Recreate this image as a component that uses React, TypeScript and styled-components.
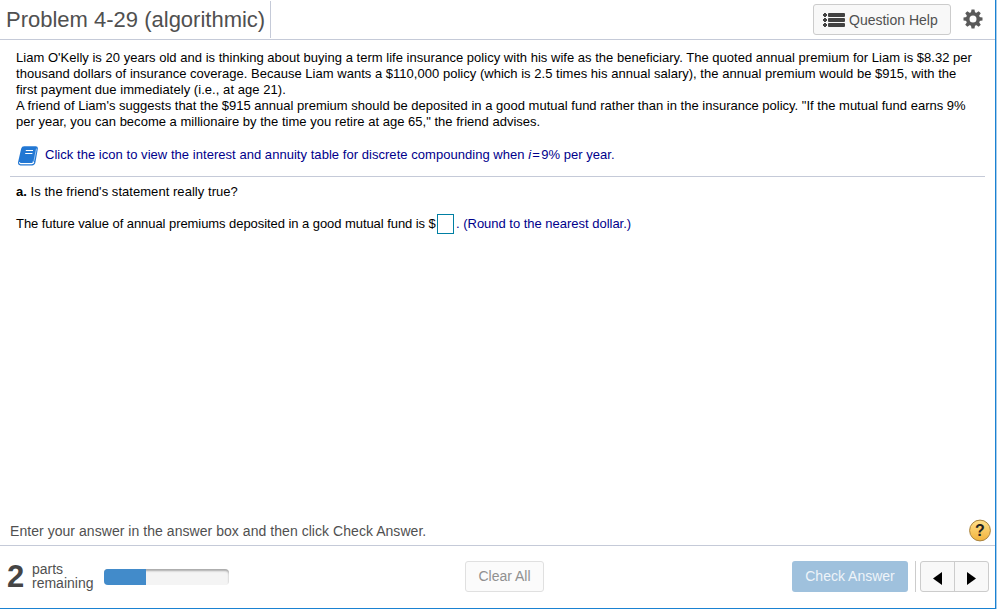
import React from "react";
import styled, { createGlobalStyle } from "styled-components";

const GlobalStyle = createGlobalStyle`
  * { box-sizing: border-box; }
  body { margin: 0; background: #fff; font-family: "Liberation Sans", Arial, sans-serif; }
  button { font-family: inherit; }
`;

const Shell = styled.div`
  display: flex;
  width: 997px;
  height: 609px;
  overflow: hidden;
  border-right: 1px solid #a9cdec;
`;

const Panel = styled.main`
  display: flex;
  flex-direction: column;
  width: 996px;
  height: 609px;
  background: #fff;
  border-right: 1px solid #1a82d2;
  border-bottom: 1px solid #1a82d2;
`;

const Header = styled.header`
  display: flex;
  align-items: flex-start;
  height: 40px;
  border-bottom: 1px solid #c5cad8;
`;

const Title = styled.h1`
  margin: 1px 0 0;
  padding-left: 6px;
  width: 271px;
  height: 37px;
  border-right: 1px solid #c5cad8;
  font-size: 22px;
  font-weight: 400;
  line-height: 37px;
  white-space: nowrap;
  color: #505050;
`;

const HelpButton = styled.button`
  display: flex;
  align-items: center;
  gap: 4px;
  width: 138px;
  height: 31px;
  margin: 4px 0 0 auto;
  padding: 0 0 0 9px;
  border: 1px solid #ccc;
  border-radius: 3px;
  background: #f8f8f8;
  color: #505050;
  font-size: 14px;
  white-space: nowrap;
`;

const GearButton = styled.button`
  display: flex;
  width: 20px;
  height: 20px;
  margin: 9px 12px 0 12px;
  padding: 0;
  border: 0;
  background: none;
`;

const Content = styled.section`
  flex: 1;
  padding: 10px 10px 0;
`;

const Line = styled.div<{ $tracking?: number }>`
  flex: none;
  height: 16px;
  padding-left: 6px;
  font-size: 13px;
  line-height: 16px;
  letter-spacing: ${(p) => p.$tracking ?? 0}px;
  white-space: nowrap;
  color: #000;
`;

const TableLink = styled.a`
  display: flex;
  align-items: center;
  height: 47px;
  padding: 2px 0 0 8px;
  border-bottom: 1px solid #c5cad8;
  font-size: 13px;
  letter-spacing: 0.041px;
  white-space: pre;
  color: #00008b;
  svg { margin: 3px 7px 0 0; }
`;

const Question = styled.div`
  padding-top: 7px;
`;

const AnswerRow = styled.div`
  display: flex;
  align-items: center;
  height: 22px;
  margin-top: 13px;
`;

const Prompt = styled(Line)`
  width: 427px;
`;

const AnswerBox = styled.input`
  width: 17px;
  height: 20px;
  padding: 0;
  border: 1px solid #007fa3;
  border-radius: 0;
  outline: none;
  background: #fff;
`;

const Note = styled.span`
  margin-left: 2px;
  font-size: 13px;
  line-height: 16px;
  letter-spacing: -0.015px;
  white-space: pre;
  color: #00008b;
`;

const Hint = styled.div`
  display: flex;
  align-items: center;
  justify-content: space-between;
  height: 30px;
  padding: 0 4px 0 10px;
  border-bottom: 1px solid #c5cad8;
  font-size: 14px;
  letter-spacing: 0.048px;
  color: #505050;
`;

const Footer = styled.footer`
  display: flex;
  align-items: flex-start;
  height: 62px;
  padding: 15px 6px 0 7px;
`;

const Count = styled.strong`
  width: 25px;
  font-size: 31px;
  line-height: 31px;
  color: #454545;
`;

const Parts = styled.div`
  width: 72px;
  padding-top: 1px;
  font-size: 14px;
  line-height: 14px;
  color: #505050;
`;

const PartsWord = styled.span`
  display: block;
  height: 14px;
`;

const Progress = styled.div`
  width: 125px;
  height: 16px;
  margin-top: 8px;
  overflow: hidden;
  border-radius: 4px;
  background: #f4f4f4;
  box-shadow: inset 0 2px 2px rgba(0, 0, 0, 0.3);
`;

const ProgressFill = styled.div`
  width: 42px;
  height: 100%;
  background: #428bca;
`;

const ClearButton = styled.button`
  width: 79px;
  height: 31px;
  margin-left: 236px;
  padding: 0 0 1px;
  border: 1px solid #e0e0e0;
  border-radius: 3px;
  background: #fbfbfb;
  color: #909090;
  font-size: 14px;
`;

const CheckButton = styled.button`
  width: 116px;
  height: 31px;
  margin-left: auto;
  padding: 0 0 1px;
  border: 0;
  border-radius: 3px;
  background: #9fc1dd;
  color: #eef4f9;
  font-size: 14px;
`;

const Divider = styled.div`
  width: 1px;
  height: 31px;
  margin: 0 4px 0 7px;
  background: #ccc;
`;

const Pager = styled.div`
  display: flex;
  width: 69px;
  height: 31px;
  overflow: hidden;
  border: 1px solid #ccc;
  border-radius: 3px;
  background: #f8f8f8;
`;

const PagerButton = styled.button`
  display: flex;
  align-items: center;
  justify-content: center;
  flex: 1;
  padding: 3px 0 0;
  border: 0;
  background: none;
  & + & { border-left: 1px solid #ccc; }
`;

const ListIcon = () => (
  <svg width="22" height="14" viewBox="0 0 22 14" fill="#424242">
    {[0, 5, 10].map((y) => (
      <g key={y}>
        <path d={`M1 ${y}H3V${y + 1}H4V${y + 3}H3V${y + 4}H1V${y + 3}H0V${y + 1}H1Z`} />
        <rect x="5" y={y} width="17" height="4" rx="1" />
      </g>
    ))}
  </svg>
);

const GearIcon = () => (
  <svg width="20" height="20" viewBox="-10 -10 20 20" fill="#5a5a5a">
    {[0, 45, 90, 135, 180, 225, 270, 315].map((a) => (
      <path key={a} d="M-2.1-6-1.5-9.5H1.5L2.1-6Z" transform={`rotate(${a})`} />
    ))}
    <circle r="5.3" fill="none" stroke="#5a5a5a" strokeWidth="3.6" />
  </svg>
);

const BookIcon = () => (
  <svg width="20" height="20" viewBox="0 0 20 20">
    <path d="M6.2.3H17.7Q20.3.3 19.8 3L17.4 16.6Q16.9 19.4 14 19.4H2.4Q-.5 19.1.1 16L3.2 2.6Q3.8.3 6.2.3Z" fill="#2277d3" />
    <path d="M18.5 2.6 16 14.7Q15.7 16.2 14.2 16.2" fill="none" stroke="#b8d7fa" strokeWidth=".8" />
    <path d="M1.7 16.1Q1.4 17.6 2.8 17.6H13.6Q15.4 17.6 15.8 15.8" fill="none" stroke="#fff" strokeWidth="1.1" />
    <path d="M7.8 4.5H15M7.2 7.5H14.4" stroke="#fff" strokeWidth="1.1" />
  </svg>
);

const HelpIcon = () => (
  <svg width="22" height="23" viewBox="0 0 22 23">
    <defs>
      <linearGradient id="gold" x1="0" y1="0" x2="0" y2="1">
        <stop offset="0" stopColor="#ffe08a" />
        <stop offset="1" stopColor="#f2b33d" />
      </linearGradient>
    </defs>
    <circle cx="11" cy="11.5" r="10.4" fill="url(#gold)" stroke="#a8813c" strokeWidth="1" />
    <text x="11" y="17.2" textAnchor="middle" fontSize="16" fontWeight="700" letterSpacing="0" fill="#222">?</text>
  </svg>
);

const Arrow = ({ left }: { left?: boolean }) => (
  <svg width="9" height="13" viewBox="0 0 9 13">
    <path d={left ? "M9 0V13L0 6.5Z" : "M0 0V13L9 6.5Z"} fill="#000" />
  </svg>
);

export default function App() {
  return (
    <Shell>
      <GlobalStyle />
      <Panel>
        <Header>
          <Title>Problem 4-29 (algorithmic)</Title>
          <HelpButton><ListIcon />Question Help</HelpButton>
          <GearButton aria-label="Settings"><GearIcon /></GearButton>
        </Header>
        <Content>
          <Line $tracking={0.022}>Liam O'Kelly is 20 years old and is thinking about buying a term life insurance policy with his wife as the beneficiary. The quoted annual premium for Liam is $8.32 per</Line>
          <Line $tracking={0.021}>thousand dollars of insurance coverage. Because Liam wants a $110,000 policy (which is 2.5 times his annual salary), the annual premium would be $915, with the</Line>
          <Line $tracking={0.052}>first payment due immediately (i.e., at age 21).</Line>
          <Line $tracking={0.007}>A friend of Liam's suggests that the $915 annual premium should be deposited in a good mutual fund rather than in the insurance policy. "If the mutual fund earns 9%</Line>
          <Line $tracking={0.016}>per year, you can become a millionaire by the time you retire at age 65," the friend advises.</Line>
          <TableLink><BookIcon />Click the icon to view the interest and annuity table for discrete compounding when <i>i</i>{"\u200a"}={"\u200a"}9% per year.</TableLink>
          <Question>
            <Line $tracking={0.045}><b>a.</b> Is the friend's statement really true?</Line>
            <AnswerRow>
              <Prompt $tracking={-0.062}>The future value of annual premiums deposited in a good mutual fund is $</Prompt>
              <AnswerBox aria-label="Future value" />
              <Note>. (Round to the nearest dollar.)</Note>
            </AnswerRow>
          </Question>
        </Content>
        <Hint>Enter your answer in the answer box and then click Check Answer.<HelpIcon /></Hint>
        <Footer>
          <Count>2</Count>
          <Parts><PartsWord>parts</PartsWord><PartsWord>remaining</PartsWord></Parts>
          <Progress><ProgressFill /></Progress>
          <ClearButton>Clear All</ClearButton>
          <CheckButton>Check Answer</CheckButton>
          <Divider />
          <Pager>
            <PagerButton aria-label="Previous"><Arrow left /></PagerButton>
            <PagerButton aria-label="Next"><Arrow /></PagerButton>
          </Pager>
        </Footer>
      </Panel>
    </Shell>
  );
}
